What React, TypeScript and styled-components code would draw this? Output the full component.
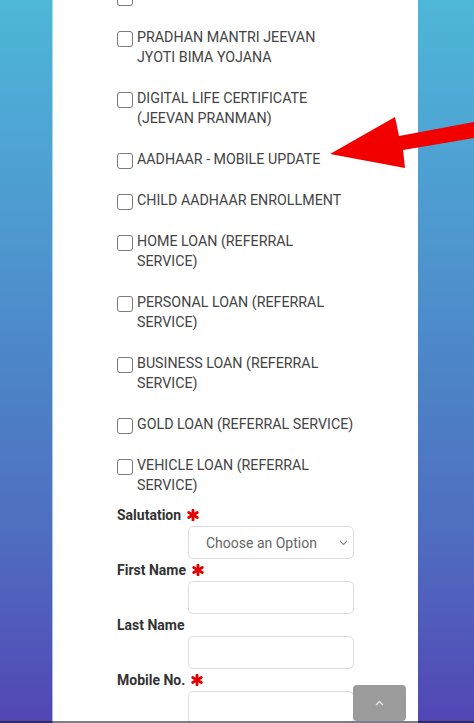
import React from "react";
import styled, { createGlobalStyle } from "styled-components";

const Global = createGlobalStyle`
  html, body { margin: 0; padding: 0; }
  body {
    font-family: Roboto, "Liberation Sans", Arial, sans-serif;
    overflow: hidden;
  }
  * { box-sizing: border-box; }
`;

const Page = styled.div`
  position: relative;
  height: 723px;
  overflow: hidden;
  padding-left: 53px;
  background: linear-gradient(180deg, #4eb7d8 0%, #4e9fd2 25%, #4d86c8 50%, #4f6cc0 75%, #5246b4 100%);
`;

const Panel = styled.div`
  width: 365px;
  height: 723px;
  background: #ffffff;
  padding-left: 64px;
  overflow: hidden;
  box-shadow: -1px 0 0 rgba(200, 240, 255, 0.7);
`;

const List = styled.div`
  display: flex;
  flex-direction: column;
  gap: 21px;
  margin-top: -14.5px;
`;

const Item = styled.div`
  display: flex;
  align-items: flex-start;
  gap: 4px;
`;

const Box = styled.span`
  flex: none;
  width: 16px;
  height: 16px;
  margin-top: 4px;
  border: 1.5px solid #7a7a7a;
  border-radius: 3px;
  background: #fff;
`;

const ItemText = styled.div`
  font-size: 14.25px;
  line-height: 20px;
  color: #444;
  white-space: nowrap;
`;

const Line = styled.div`
  height: 20px;
`;

const Fields = styled.div`
  margin-top: 9.5px;
  display: flex;
  flex-direction: column;
`;

const Field = styled.div`
  display: flex;
  flex-direction: column;
`;

const Label = styled.div`
  display: flex;
  align-items: center;
  gap: 6px;
  height: 22px;
  font-size: 14px;
  font-weight: 700;
  color: #333;
`;

const Control = styled.div`
  margin-left: 71px;
  width: 166px;
  height: 33px;
  border: 1px solid #dcdcdc;
  border-radius: 5px;
  background: #fff;
  display: flex;
  align-items: center;
  justify-content: space-between;
  padding: 0 5px 0 17px;
  font-size: 14px;
  color: #666;
`;

const ArrowWrap = styled.svg`
  position: absolute;
  left: 330px;
  top: 117px;
  width: 144px;
  height: 51px;
  overflow: visible;
`;

const ScrollTop = styled.div`
  position: absolute;
  left: 353px;
  top: 685px;
  width: 53px;
  height: 36px;
  border-radius: 4px;
  background: #9b9b9b;
  display: flex;
  align-items: center;
  justify-content: center;
`;

const BottomStrip = styled.div`
  position: absolute;
  left: 0;
  right: 0;
  bottom: 0;
  height: 2px;
  background: rgba(20, 20, 40, 0.55);
`;

const Required = () => (
  <svg width="12" height="12" viewBox="0 0 12 12">
    <g stroke="#e30000" strokeWidth="2.8" strokeLinecap="round">
      <line x1="6" y1="1" x2="6" y2="11" />
      <line x1="1.7" y1="3.5" x2="10.3" y2="8.5" />
      <line x1="1.7" y1="8.5" x2="10.3" y2="3.5" />
    </g>
  </svg>
);

const Chevron = () => (
  <svg width="9" height="6" viewBox="0 0 9 6">
    <polyline points="1,1 4.5,4.5 8,1" fill="none" stroke="#888" strokeWidth="1.1" />
  </svg>
);

const items: string[][] = [
  ["\u00a0"],
  ["PRADHAN MANTRI JEEVAN", "JYOTI BIMA YOJANA"],
  ["DIGITAL LIFE CERTIFICATE", "(JEEVAN PRANMAN)"],
  ["AADHAAR - MOBILE UPDATE"],
  ["CHILD AADHAAR ENROLLMENT"],
  ["HOME LOAN (REFERRAL", "SERVICE)"],
  ["PERSONAL LOAN (REFERRAL", "SERVICE)"],
  ["BUSINESS LOAN (REFERRAL", "SERVICE)"],
  ["GOLD LOAN (REFERRAL SERVICE)"],
  ["VEHICLE LOAN (REFERRAL", "SERVICE)"],
];

const fields: { label: string; required: boolean; select?: boolean }[] = [
  { label: "Salutation", required: true, select: true },
  { label: "First Name", required: true },
  { label: "Last Name", required: false },
  { label: "Mobile No.", required: true },
];

export default function App() {
  return (
    <>
      <Global />
      <Page>
        <Panel>
          <List>
            {items.map((lines, i) => (
              <Item key={i}>
                <Box />
                <ItemText>
                  {lines.map((l, j) => (
                    <Line key={j}>{l}</Line>
                  ))}
                </ItemText>
              </Item>
            ))}
          </List>
          <Fields>
            {fields.map((f) => (
              <Field key={f.label}>
                <Label>
                  {f.label}
                  {f.required && <Required />}
                </Label>
                <Control>
                  {f.select && (
                    <>
                      <span>Choose an Option</span>
                      <Chevron />
                    </>
                  )}
                </Control>
              </Field>
            ))}
          </Fields>
        </Panel>
        <ArrowWrap viewBox="0 0 144 51">
          <polygon
            points="0,37 65,0 69,19 144,5 144,21 73,33 75,51"
            fill="#f20000"
          />
        </ArrowWrap>
        <ScrollTop>
          <svg width="9" height="6" viewBox="0 0 9 6">
            <polyline points="1,5 4.5,1.5 8,5" fill="none" stroke="#e6e6e6" strokeWidth="1.3" />
          </svg>
        </ScrollTop>
        <BottomStrip />
      </Page>
    </>
  );
}
